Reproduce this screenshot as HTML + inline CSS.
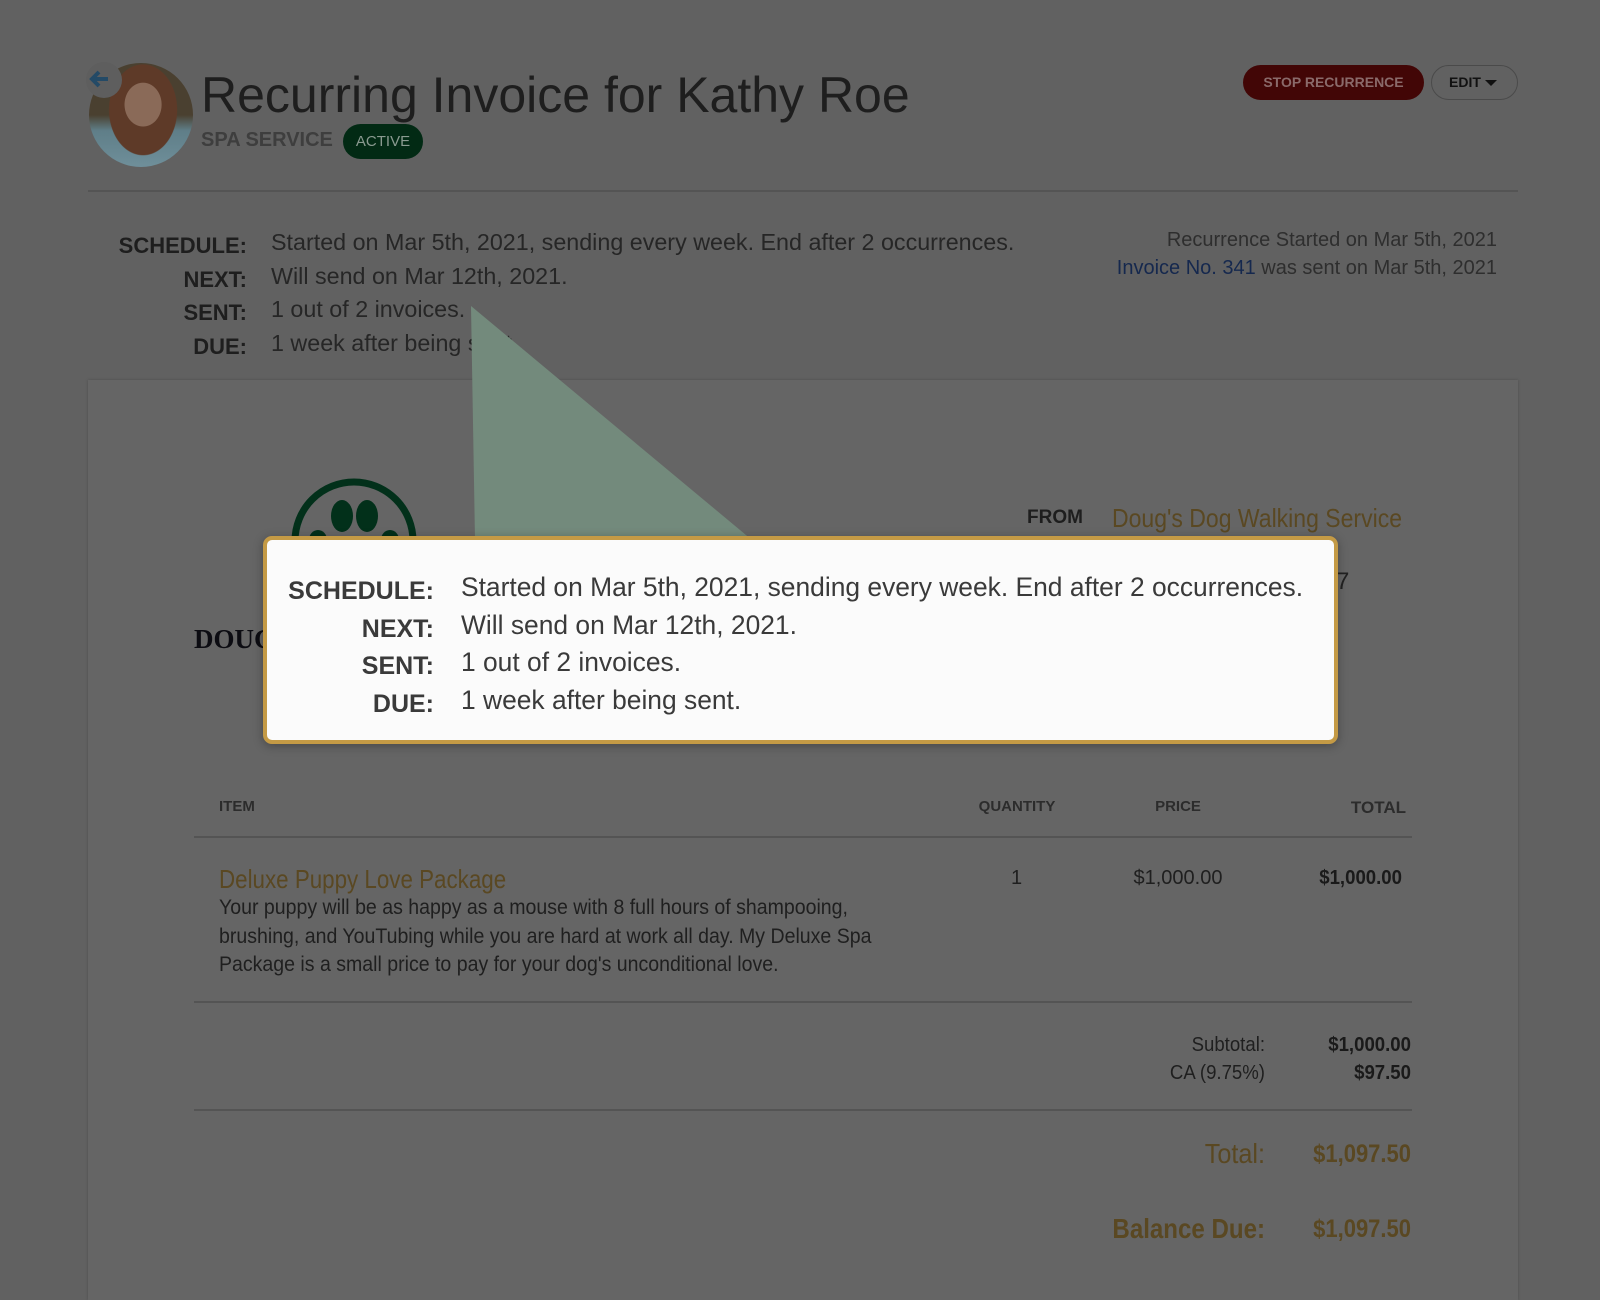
<!DOCTYPE html>
<html><head><meta charset="utf-8"><style>
*{margin:0;padding:0;box-sizing:border-box}
body{width:1600px;height:1280px;background:#616161;position:relative;overflow:hidden;font-family:"Liberation Sans",sans-serif;color:#1f1f1f}
.a{position:absolute;white-space:nowrap}
.r{text-align:right}
.sl{transform-origin:left top}
.sr{transform-origin:right top}
.line{position:absolute;height:2px;background:#545454}
</style></head><body>
<!-- header -->
<div class="a" style="left:89px;top:63px;width:104px;height:104px;border-radius:50%;background:radial-gradient(ellipse 22% 26% at 52% 40%,#8a6a58 0 80%,transparent 82%),radial-gradient(ellipse 36% 48% at 52% 45%,#5e3a28 0 90%,transparent 92%),linear-gradient(180deg,#4a4030 0 50%,#5f7e88 65%,#6f8f9a 100%);overflow:hidden"></div>
<div class="a" style="left:86px;top:62px;width:36px;height:36px;border-radius:50%;background:#5e5e5e"></div>
<svg class="a" style="left:88px;top:68px" width="24" height="22" viewBox="0 0 24 22"><path d="M20 11H5M11 4L4 11l7 7" stroke="#244a66" stroke-width="4" fill="none"/></svg>
<div class="a" style="left:201px;top:66px;font-size:50px;color:#1e1e1e">Recurring Invoice for Kathy Roe</div>
<div class="a" style="left:201px;top:129px;font-size:20px;font-weight:bold;color:#3e3e3e">SPA SERVICE</div>
<div class="a" style="left:343px;top:124px;width:80px;height:35px;border-radius:18px;background:#022a14;color:#8a9a90;font-size:15px;line-height:35px;text-align:center">ACTIVE</div>
<div class="a" style="left:1243px;top:65px;width:181px;height:35px;border-radius:18px;background:#420606;color:#8a6a6a;font-size:14px;font-weight:bold;line-height:35px;text-align:center">STOP RECURRENCE</div>
<div class="a" style="left:1431px;top:65px;width:87px;height:35px;border-radius:18px;border:1.5px solid #4a4a4a;color:#111;font-size:14px;font-weight:bold;line-height:32px;padding-left:17px">EDIT <span style="display:inline-block;border-left:6px solid transparent;border-right:6px solid transparent;border-top:6px solid #111;vertical-align:middle"></span></div>
<div class="line" style="left:88px;top:190px;width:1430px"></div>
<!-- schedule -->
<div class="a r" style="left:60px;width:187px;top:229px;font-size:22px;font-weight:bold;line-height:33.7px;color:#1e1e1e">SCHEDULE:<br>NEXT:<br>SENT:<br>DUE:</div>
<div class="a" style="left:271px;top:226px;font-size:23.3px;line-height:33.7px;color:#262626">Started on Mar 5th, 2021, sending every week. End after 2 occurrences.<br>Will send on Mar 12th, 2021.<br>1 out of 2 invoices.<br>1 week after being sent.</div>
<div class="a r" style="right:103px;top:226px;font-size:20px;line-height:28px;color:#2e2e2e">Recurrence Started on Mar 5th, 2021<br><span style="color:#15284e">Invoice No. 341</span> was sent on Mar 5th, 2021</div>
<!-- card -->
<div class="a" style="left:88px;top:380px;width:1430px;height:920px;background:#656565;box-shadow:0 0 3px rgba(0,0,0,.2)"></div>
<svg class="a" style="left:290px;top:478px" width="130" height="70" viewBox="0 0 130 70"><circle cx="64" cy="63" r="59" stroke="#02301a" stroke-width="7" fill="none"/><ellipse cx="52" cy="38" rx="11" ry="16" fill="#02301a"/><ellipse cx="77" cy="38" rx="11" ry="16" fill="#02301a"/><ellipse cx="28" cy="62" rx="9" ry="10" fill="#02301a"/><ellipse cx="100" cy="62" rx="9" ry="10" fill="#02301a"/></svg>
<div class="a" style="left:194px;top:624px;font-family:'Liberation Serif',serif;font-weight:bold;font-size:27px;color:#0c0c12">DOUG</div>
<div class="a" style="left:1027px;top:507px;font-size:19px;font-weight:bold;color:#1e1e1e">FROM</div>
<div class="a sl" style="left:1112px;top:503px;font-size:26px;color:#5a4822;transform:scaleX(0.885)">Doug's Dog Walking Service</div>
<div class="a" style="left:1336px;top:568px;font-size:24px;color:#222">7</div>
<!-- table -->
<div class="a" style="left:219px;top:798px;font-size:15px;font-weight:bold;color:#2c2c2c">ITEM</div>
<div class="a" style="left:967px;width:100px;text-align:center;top:798px;font-size:15px;font-weight:bold;color:#2c2c2c">QUANTITY</div>
<div class="a" style="left:1128px;width:100px;text-align:center;top:798px;font-size:15px;font-weight:bold;color:#2c2c2c">PRICE</div>
<div class="a r" style="left:1306px;width:100px;top:798px;font-size:17px;font-weight:bold;color:#2c2c2c">TOTAL</div>
<div class="line" style="left:194px;top:836px;width:1218px"></div>
<div class="a sl" style="left:219px;top:864px;font-size:26px;color:#5a4822;transform:scaleX(0.86)">Deluxe Puppy Love Package</div>
<div class="a sl" style="left:219px;top:894px;font-size:21px;line-height:28.5px;color:#1f1f1f;transform:scaleX(0.93)">Your puppy will be as happy as a mouse with 8 full hours of shampooing,<br>brushing, and YouTubing while you are hard at work all day. My Deluxe Spa<br>Package is a small price to pay for your dog's unconditional love.</div>
<div class="a" style="left:1011px;top:867px;font-size:20px;color:#1f1f1f">1</div>
<div class="a" style="left:1128px;width:100px;text-align:center;top:867px;font-size:20px;color:#1f1f1f">$1,000.00</div>
<div class="a r sr" style="left:1262px;width:140px;top:867px;font-size:20px;font-weight:bold;color:#1a1a1a;transform:scaleX(0.93)">$1,000.00</div>
<div class="line" style="left:194px;top:1001px;width:1218px"></div>
<div class="a r sr" style="left:1100px;width:165px;top:1031px;font-size:20px;line-height:28px;color:#1f1f1f;transform:scaleX(0.93)">Subtotal:<br>CA (9.75%)</div>
<div class="a r sr" style="left:1270px;width:141px;top:1031px;font-size:20px;line-height:28px;font-weight:bold;color:#1a1a1a;transform:scaleX(0.93)">$1,000.00<br>$97.50</div>
<div class="line" style="left:194px;top:1109px;width:1218px"></div>
<div class="a r sr" style="left:1100px;width:165px;top:1138px;font-size:28px;color:#5a4822;transform:scaleX(0.9)">Total:</div>
<div class="a r sr" style="left:1270px;width:141px;top:1140px;font-size:25px;font-weight:bold;color:#5a4822;transform:scaleX(0.88)">$1,097.50</div>
<div class="a r sr" style="left:1050px;width:215px;top:1213px;font-size:28px;font-weight:bold;color:#5a4822;transform:scaleX(0.86)">Balance Due:</div>
<div class="a r sr" style="left:1270px;width:141px;top:1215px;font-size:25px;font-weight:bold;color:#5a4822;transform:scaleX(0.88)">$1,097.50</div>
<!-- highlight -->
<svg class="a" style="left:0;top:0" width="1600" height="1280"><polygon points="471,306 475,540 752,540" fill="#738a7c"/></svg>
<div class="a" style="left:263px;top:536px;width:1075px;height:208px;background:#fbfbfb;border:4px solid #c49a45;border-radius:9px;box-shadow:0 2px 10px rgba(0,0,0,.3)"></div>
<div class="a r" style="left:270px;width:164px;top:573px;font-size:25px;font-weight:bold;line-height:37.7px;color:#3a3a3a">SCHEDULE:<br>NEXT:<br>SENT:<br>DUE:</div>
<div class="a" style="left:461px;top:569px;font-size:26.4px;line-height:37.7px;color:#3a3a3a">Started on Mar 5th, 2021, sending every week. End after 2 occurrences.<br>Will send on Mar 12th, 2021.<br>1 out of 2 invoices.<br>1 week after being sent.</div>
</body></html>
